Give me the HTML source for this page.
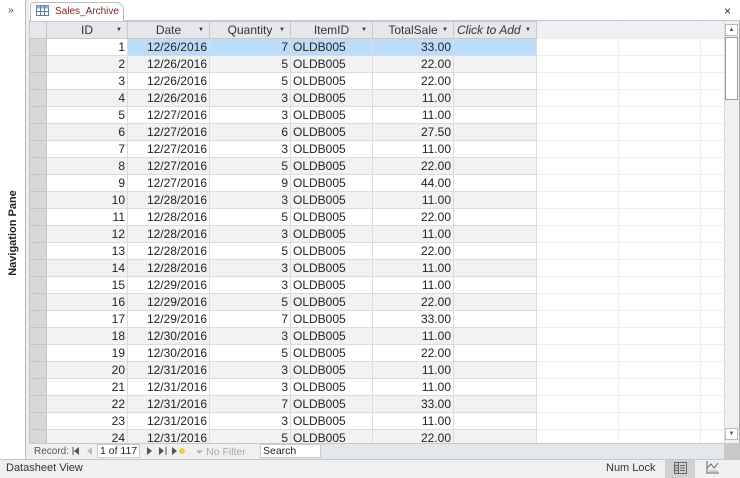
<!DOCTYPE html>
<html><head><meta charset="utf-8"><style>
*{margin:0;padding:0;box-sizing:border-box}
body{width:740px;height:478px;overflow:hidden;background:#fff;font-family:"Liberation Sans",sans-serif;font-size:11px;color:#222;position:relative}
.abs{position:absolute}
table{border-collapse:collapse;table-layout:fixed;position:absolute;left:29px;top:21px}
td{height:17px;border:1px solid #dcdcdc;padding:0 2px;white-space:nowrap;overflow:hidden;line-height:15px;font-size:12px}
tr.h td{background:#e4e7ec;border-color:#c8c8c8;color:#333;text-align:center;position:relative}
tr.h td span.dd{position:absolute;right:5px;top:1px;font-size:6px}
td.s{background:#d6d6d6;border-color:#c4c4c4;padding:0}
td.r{text-align:right}
tr.e td{background:#f2f2f2}
tr.e td.s,tr td.s{background:#d8d8d8}
tr.sel td.b{background:#bcdcfb}
td.w{background:#fff !important;border-color:#eee}
</style></head><body>
<div class="abs" style="left:0;top:0;width:26px;height:459px;background:#fff;border-right:1px solid #bdbdbd"></div>
<div class="abs" style="left:26px;top:0;width:3px;height:459px;background:#ececec"></div>
<div class="abs" style="left:8px;top:5px;font-size:10px;color:#444;letter-spacing:-2px">»</div>
<div class="abs" style="left:13px;top:233px;transform:translate(-50%,-50%) rotate(-90deg);font-weight:bold;font-size:11px;white-space:nowrap">Navigation Pane</div>
<div class="abs" style="left:29px;top:0;width:711px;height:21px;background:#fff;border-bottom:1px solid #c8c8c8"></div>
<div class="abs" style="left:30px;top:2px;width:94px;height:20px;background:#fff;border:1px solid #bcbcbc;border-bottom:none;border-radius:3px 8px 0 0"></div>
<svg class="abs" style="left:36px;top:5px" width="13" height="11"><rect x="0.5" y="0.5" width="12" height="10" fill="#fff" stroke="#5a7ca8"/><rect x="0.5" y="0.5" width="12" height="3" fill="#8fb0d8"/><path d="M0 6.5H13M4.5 0V11M8.5 0V11" stroke="#5a7ca8"/></svg>
<div class="abs" style="left:55px;top:6px;color:#8b1a1a;font-size:10px">Sales_Archive</div>
<div class="abs" style="left:724px;top:4px;font-size:12px;color:#333">×</div>
<table>
<colgroup><col style="width:17px"><col style="width:81px"><col style="width:82px"><col style="width:81px"><col style="width:82px"><col style="width:81px"><col style="width:83px"><col style="width:82px"><col style="width:82px"><col style="width:24px"></colgroup>
<tr class="h"><td class="s" style="background:#e4e7ec"></td><td>ID<span class="dd">▼</span></td><td>Date<span class="dd">▼</span></td><td>Quantity<span class="dd">▼</span></td><td>ItemID<span class="dd">▼</span></td><td>TotalSale<span class="dd">▼</span></td><td style="font-style:italic;text-align:left;padding-left:3px">Click to Add<span class="dd">▼</span></td><td style="background:#eef0f6;border-color:#eee"></td><td style="background:#eef0f6;border-color:#eee"></td><td style="background:#eef0f6;border-color:#eee"></td></tr>
<tr class="sel"><td class="s"></td><td class="r" style="background:#fff">1</td><td class="b r">12/26/2016</td><td class="b r">7</td><td class="b">OLDB005</td><td class="b r">33.00</td><td class="b"></td><td class="w"></td><td class="w"></td><td class="w"></td></tr>
<tr class="e"><td class="s"></td><td class="r">2</td><td class="r">12/26/2016</td><td class="r">5</td><td>OLDB005</td><td class="r">22.00</td><td></td><td class="w"></td><td class="w"></td><td class="w"></td></tr>
<tr><td class="s"></td><td class="r">3</td><td class="r">12/26/2016</td><td class="r">5</td><td>OLDB005</td><td class="r">22.00</td><td></td><td class="w"></td><td class="w"></td><td class="w"></td></tr>
<tr class="e"><td class="s"></td><td class="r">4</td><td class="r">12/26/2016</td><td class="r">3</td><td>OLDB005</td><td class="r">11.00</td><td></td><td class="w"></td><td class="w"></td><td class="w"></td></tr>
<tr><td class="s"></td><td class="r">5</td><td class="r">12/27/2016</td><td class="r">3</td><td>OLDB005</td><td class="r">11.00</td><td></td><td class="w"></td><td class="w"></td><td class="w"></td></tr>
<tr class="e"><td class="s"></td><td class="r">6</td><td class="r">12/27/2016</td><td class="r">6</td><td>OLDB005</td><td class="r">27.50</td><td></td><td class="w"></td><td class="w"></td><td class="w"></td></tr>
<tr><td class="s"></td><td class="r">7</td><td class="r">12/27/2016</td><td class="r">3</td><td>OLDB005</td><td class="r">11.00</td><td></td><td class="w"></td><td class="w"></td><td class="w"></td></tr>
<tr class="e"><td class="s"></td><td class="r">8</td><td class="r">12/27/2016</td><td class="r">5</td><td>OLDB005</td><td class="r">22.00</td><td></td><td class="w"></td><td class="w"></td><td class="w"></td></tr>
<tr><td class="s"></td><td class="r">9</td><td class="r">12/27/2016</td><td class="r">9</td><td>OLDB005</td><td class="r">44.00</td><td></td><td class="w"></td><td class="w"></td><td class="w"></td></tr>
<tr class="e"><td class="s"></td><td class="r">10</td><td class="r">12/28/2016</td><td class="r">3</td><td>OLDB005</td><td class="r">11.00</td><td></td><td class="w"></td><td class="w"></td><td class="w"></td></tr>
<tr><td class="s"></td><td class="r">11</td><td class="r">12/28/2016</td><td class="r">5</td><td>OLDB005</td><td class="r">22.00</td><td></td><td class="w"></td><td class="w"></td><td class="w"></td></tr>
<tr class="e"><td class="s"></td><td class="r">12</td><td class="r">12/28/2016</td><td class="r">3</td><td>OLDB005</td><td class="r">11.00</td><td></td><td class="w"></td><td class="w"></td><td class="w"></td></tr>
<tr><td class="s"></td><td class="r">13</td><td class="r">12/28/2016</td><td class="r">5</td><td>OLDB005</td><td class="r">22.00</td><td></td><td class="w"></td><td class="w"></td><td class="w"></td></tr>
<tr class="e"><td class="s"></td><td class="r">14</td><td class="r">12/28/2016</td><td class="r">3</td><td>OLDB005</td><td class="r">11.00</td><td></td><td class="w"></td><td class="w"></td><td class="w"></td></tr>
<tr><td class="s"></td><td class="r">15</td><td class="r">12/29/2016</td><td class="r">3</td><td>OLDB005</td><td class="r">11.00</td><td></td><td class="w"></td><td class="w"></td><td class="w"></td></tr>
<tr class="e"><td class="s"></td><td class="r">16</td><td class="r">12/29/2016</td><td class="r">5</td><td>OLDB005</td><td class="r">22.00</td><td></td><td class="w"></td><td class="w"></td><td class="w"></td></tr>
<tr><td class="s"></td><td class="r">17</td><td class="r">12/29/2016</td><td class="r">7</td><td>OLDB005</td><td class="r">33.00</td><td></td><td class="w"></td><td class="w"></td><td class="w"></td></tr>
<tr class="e"><td class="s"></td><td class="r">18</td><td class="r">12/30/2016</td><td class="r">3</td><td>OLDB005</td><td class="r">11.00</td><td></td><td class="w"></td><td class="w"></td><td class="w"></td></tr>
<tr><td class="s"></td><td class="r">19</td><td class="r">12/30/2016</td><td class="r">5</td><td>OLDB005</td><td class="r">22.00</td><td></td><td class="w"></td><td class="w"></td><td class="w"></td></tr>
<tr class="e"><td class="s"></td><td class="r">20</td><td class="r">12/31/2016</td><td class="r">3</td><td>OLDB005</td><td class="r">11.00</td><td></td><td class="w"></td><td class="w"></td><td class="w"></td></tr>
<tr><td class="s"></td><td class="r">21</td><td class="r">12/31/2016</td><td class="r">3</td><td>OLDB005</td><td class="r">11.00</td><td></td><td class="w"></td><td class="w"></td><td class="w"></td></tr>
<tr class="e"><td class="s"></td><td class="r">22</td><td class="r">12/31/2016</td><td class="r">7</td><td>OLDB005</td><td class="r">33.00</td><td></td><td class="w"></td><td class="w"></td><td class="w"></td></tr>
<tr><td class="s"></td><td class="r">23</td><td class="r">12/31/2016</td><td class="r">3</td><td>OLDB005</td><td class="r">11.00</td><td></td><td class="w"></td><td class="w"></td><td class="w"></td></tr>
<tr class="e"><td class="s"></td><td class="r">24</td><td class="r">12/31/2016</td><td class="r">5</td><td>OLDB005</td><td class="r">22.00</td><td></td><td class="w"></td><td class="w"></td><td class="w"></td></tr>
</table>
<div class="abs" style="left:724px;top:21px;width:16px;height:422px;background:#f0f0f0;border-left:1px solid #dcdcdc;border-right:1px solid #aaa"></div>
<div class="abs" style="left:725px;top:24px;width:13px;height:12px;border:1px solid #bbb;background:#fff;font-size:6px;text-align:center;line-height:10px;color:#555">▲</div>
<div class="abs" style="left:725px;top:37px;width:13px;height:63px;border:1px solid #999;background:#fff"></div>
<div class="abs" style="left:725px;top:428px;width:13px;height:12px;border:1px solid #bbb;background:#fff;font-size:6px;text-align:center;line-height:10px;color:#555">▼</div>
<div class="abs" style="left:29px;top:443px;width:711px;height:16px;background:#f0f0f0;border-top:1px solid #c8c8c8"></div>
<div class="abs" style="left:260px;top:444px;width:464px;height:15px;background:#e3e6ec"></div>
<div class="abs" style="left:724px;top:443px;width:16px;height:16px;background:#c8c8c8"></div>
<div class="abs" style="left:34px;top:446px;color:#555;font-size:10px">Record:</div>
<svg class="abs" style="left:72px;top:447px" width="8" height="8"><path d="M1 0V8" stroke="#555"/><path d="M7 0L2 4L7 8Z" fill="#555"/></svg>
<svg class="abs" style="left:87px;top:447px" width="6" height="8"><path d="M5 0L0 4L5 8Z" fill="#bbb"/></svg>
<div class="abs" style="left:97px;top:444px;width:43px;height:14px;background:#fff;border:1px solid #ccc;font-size:10.5px;padding-left:2px;line-height:12px">1 of 117</div>
<svg class="abs" style="left:147px;top:447px" width="6" height="8"><path d="M0 0L5 4L0 8Z" fill="#555"/></svg>
<svg class="abs" style="left:159px;top:447px" width="8" height="8"><path d="M7 0V8" stroke="#555"/><path d="M0 0L5 4L0 8Z" fill="#555"/></svg>
<svg class="abs" style="left:172px;top:446px" width="14" height="10"><path d="M0 1L5 5L0 9Z" fill="#555"/><circle cx="10" cy="5" r="3" fill="#f0d040"/></svg>
<div class="abs" style="left:196px;top:446px;color:#aaa;font-size:10.5px"><span style="font-size:9px">⏷</span> No Filter</div>
<div class="abs" style="left:260px;top:444px;width:61px;height:14px;background:#fff;border:1px solid #ccc;font-size:10.5px;padding-left:2px;line-height:12px">Search</div>
<div class="abs" style="left:0;top:459px;width:740px;height:19px;background:#f0f0f0;border-top:1px solid #c6c6c6"></div>
<div class="abs" style="left:6px;top:462px;color:#333;font-size:11px">Datasheet View</div>
<div class="abs" style="left:606px;top:462px;color:#333;font-size:11px">Num Lock</div>
<div class="abs" style="left:665px;top:460px;width:30px;height:18px;background:#d0d0d0"></div>
<svg class="abs" style="left:674px;top:462px" width="13" height="12"><rect x="0.5" y="0.5" width="12" height="11" fill="none" stroke="#666"/><path d="M4.5 0V12M6 3.5H11M6 6H11M6 8.5H11M1 3.5H4M1 6H4M1 8.5H4" stroke="#666"/></svg>
<svg class="abs" style="left:706px;top:461px" width="14" height="13"><path d="M1 0V12H13M1 7L5 3L8 7L12 2" fill="none" stroke="#666"/><path d="M3 10H12" stroke="#aaa"/></svg>
</body></html>
